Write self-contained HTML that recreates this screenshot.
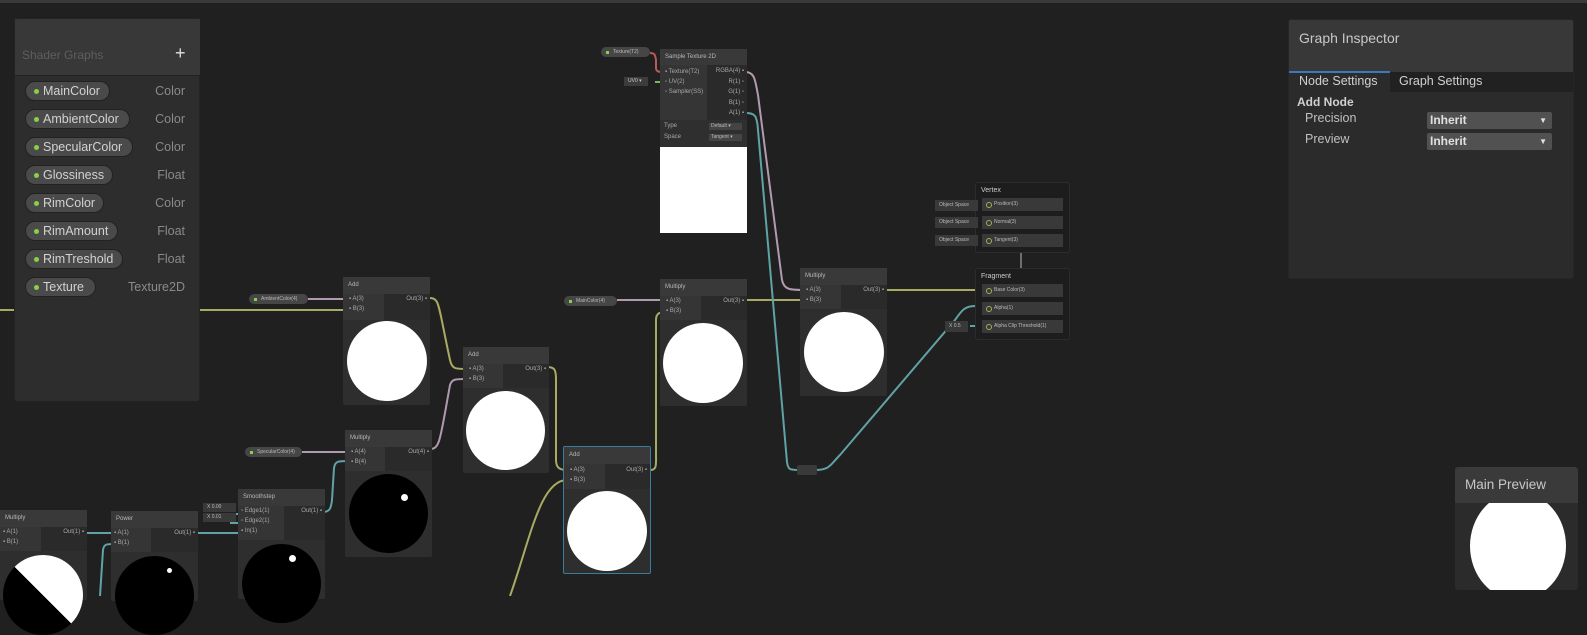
<!DOCTYPE html>
<html><head><meta charset="utf-8"><style>
*{margin:0;padding:0;box-sizing:border-box}
body{width:1587px;height:596px;background:#202020;overflow:hidden;position:relative;font-family:"Liberation Sans",sans-serif}
.a{position:absolute}
.n{position:absolute;background:#2e2e2e;border-radius:2px}
.h{position:absolute;left:0;right:0;top:0;height:17px;background:#393939;color:#b8b8b8;font-size:6px;line-height:17px;padding-left:5px}
.pl{position:absolute;left:0;background:#353535}
.pr{position:absolute;background:#2a2a2a}
.t{position:absolute;font-size:6px;color:#a8a8a8;white-space:nowrap}
.c{position:absolute;border-radius:50%;background:#fff}
.pill{position:absolute;height:20px;border-radius:10px;background:#4a4a4a;border:1px solid #222;color:#d2d2d2;font-size:12.5px;line-height:18px;padding-left:17px}
.pill:before{content:"";position:absolute;left:8px;top:7px;width:5px;height:5px;border-radius:50%;background:#86d04a}
.ty{position:absolute;right:14px;color:#8a8a8a;font-size:12.5px}
.sp{position:absolute;height:10px;border-radius:5px;background:#464646;font-size:5px;color:#bbb;line-height:10px;padding-left:12px;white-space:nowrap}
.sp:before{content:"";position:absolute;left:5px;top:4px;width:3px;height:3px;background:#86d04a}
.row{position:absolute;left:6px;right:6px;height:13px;background:#393939;font-size:5px;color:#bbb;line-height:13px;padding-left:12px;white-space:nowrap;text-align:left;overflow:hidden}
.row:before{content:"";position:absolute;left:4px;top:4px;width:4px;height:4px;border-radius:50%;border:1px solid #a8ab62}
.os{position:absolute;height:11px;background:#393939;font-size:5px;color:#bbb;line-height:11px;padding-left:4px;white-space:nowrap}
</style></head><body>
<div class="a" style="left:0;top:0;width:1587px;height:3px;background:#3a3a3a"></div>

<svg class="a" style="left:0;top:0" width="1587" height="596" fill="none" stroke-width="2">
<path d="M0 310 H345" stroke="#a8ab62"/>
<path d="M308 299 H345" stroke="#b19ab0"/>
<path d="M428 298 C440 298 437 300 450 360 C452 369 455 369 467 369" stroke="#a8ab62"/>
<path d="M430 449 C440 449 440 440 450 385 C452 379 455 379 467 379" stroke="#b19ab0"/>
<path d="M547 367 C555 367 556 370 556 380 V460 C556 468 560 470 567 470" stroke="#a8ab62"/>
<path d="M510 596 C530 540 540 480 567 480" stroke="#a8ab62"/>
<path d="M650 470 C657 470 656 465 656 455 V320 C656 313 660 312 666 312" stroke="#a8ab62"/>
<path d="M617 300 H666" stroke="#b19ab0"/>
<path d="M745 300 H806" stroke="#a8ab62"/>
<path d="M745 72 C755 72 755 80 758 95 L782 280 C784 290 790 290 806 290" stroke="#b19ab0"/>
<path d="M745 113 C755 113 757 115 758 130 L787 462 C788 470 790 470 800 470" stroke="#5fa3a6"/>
<path d="M815 470 C830 470 830 465 840 455 L955 320 C962 310 965 306 975 306" stroke="#5fa3a6"/>
<path d="M884 290 H984" stroke="#a8ab62"/>
<path d="M650 53 C655 53 655 55 656 60 V68 C656 72 660 72 663 72" stroke="#b85a5a"/>
<path d="M655 82 H664" stroke="#76b860"/>
<path d="M302 452 H349" stroke="#b19ab0"/>
<path d="M323 512 C330 512 331 508 332 500 L334 468 C335 461 338 461 349 461" stroke="#5fa3a6"/>
<path d="M197 533 C210 533 220 533 243 533" stroke="#5fa3a6"/>
<path d="M85 533 H115" stroke="#5fa3a6"/>
<path d="M100 596 L103 550 C104 544 106 544 115 544" stroke="#5fa3a6"/>
<path d="M230 514 H243 M230 523 H243" stroke="#5fa3a6"/>
<path d="M970 205 H984 M970 222 H984 M970 240 H984" stroke="#a8ab62"/>
<path d="M970 326 H984" stroke="#5fa3a6"/>
<path d="M1021 253 V268" stroke="#888" stroke-width="1.5"/>
</svg>

<div class="a" style="left:14px;top:18px;width:186px;height:384px;background:#2d2d2d;border-radius:3px;border:1px solid #232323">
 <div class="a" style="left:0;top:0;width:185px;height:57px;background:#383838;border-bottom:1px solid #222"></div>
 <div class="a" style="left:7px;top:29px;color:#5e5e5e;font-size:12px">Shader Graphs</div>
 <div class="a" style="left:160px;top:24px;color:#e0e0e0;font-size:18px">+</div>
 <div class="pill" style="left:10px;top:62px;width:85px">MainColor</div><div class="ty" style="top:65px">Color</div>
 <div class="pill" style="left:10px;top:90px;width:105px">AmbientColor</div><div class="ty" style="top:93px">Color</div>
 <div class="pill" style="left:10px;top:118px;width:108px">SpecularColor</div><div class="ty" style="top:121px">Color</div>
 <div class="pill" style="left:10px;top:146px;width:88px">Glossiness</div><div class="ty" style="top:149px">Float</div>
 <div class="pill" style="left:10px;top:174px;width:79px">RimColor</div><div class="ty" style="top:177px">Color</div>
 <div class="pill" style="left:10px;top:202px;width:93px">RimAmount</div><div class="ty" style="top:205px">Float</div>
 <div class="pill" style="left:10px;top:230px;width:98px">RimTreshold</div><div class="ty" style="top:233px">Float</div>
 <div class="pill" style="left:10px;top:258px;width:71px">Texture</div><div class="ty" style="top:261px">Texture2D</div>
</div>

<div class="sp" style="left:249px;top:294px;width:59px">AmbientColor(4)</div>
<div class="sp" style="left:564px;top:296px;width:53px">MainColor(4)</div>
<div class="sp" style="left:245px;top:447px;width:57px">SpecularColor(4)</div>
<div class="sp" style="left:601px;top:47px;width:49px">Texture(T2)</div>

<div class="n" style="left:343px;top:277px;width:87px;height:128px"><div class="h">Add</div>
<div class="pl" style="top:17px;width:41px;height:26px"></div><div class="pr" style="left:41px;top:17px;width:46px;height:26px"></div>
<div class="t" style="left:6px;top:19px">▪ A(3)</div><div class="t" style="left:6px;top:29px">▪ B(3)</div><div class="t" style="right:3px;top:19px">Out(3) ▪</div>
<div class="c" style="left:4px;top:44px;width:80px;height:80px"></div></div>

<div class="n" style="left:463px;top:347px;width:86px;height:126px"><div class="h">Add</div>
<div class="pl" style="top:17px;width:40px;height:24px"></div><div class="pr" style="left:40px;top:17px;width:46px;height:24px"></div>
<div class="t" style="left:6px;top:19px">▪ A(3)</div><div class="t" style="left:6px;top:29px">▪ B(3)</div><div class="t" style="right:3px;top:19px">Out(3) ▪</div>
<div class="c" style="left:3px;top:44px;width:79px;height:79px"></div></div>

<div class="n" style="left:345px;top:430px;width:87px;height:127px"><div class="h">Multiply</div>
<div class="pl" style="top:17px;width:40px;height:24px"></div><div class="pr" style="left:40px;top:17px;width:47px;height:24px"></div>
<div class="t" style="left:6px;top:19px">▪ A(4)</div><div class="t" style="left:6px;top:29px">▪ B(4)</div><div class="t" style="right:3px;top:19px">Out(4) ▪</div>
<div class="c" style="left:4px;top:44px;width:79px;height:79px;background:#000"></div>
<div class="c" style="left:56px;top:64px;width:7px;height:7px"></div></div>

<div class="n" style="left:563px;top:446px;width:88px;height:128px;border:1px solid #3a7ca0"><div class="h">Add</div>
<div class="pl" style="top:17px;width:41px;height:25px"></div><div class="pr" style="left:41px;top:17px;width:45px;height:25px"></div>
<div class="t" style="left:6px;top:20px">▪ A(3)</div><div class="t" style="left:6px;top:30px">▪ B(3)</div><div class="t" style="right:3px;top:20px">Out(3) ▪</div>
<div class="c" style="left:3px;top:44px;width:80px;height:80px"></div></div>

<div class="n" style="left:660px;top:279px;width:87px;height:127px"><div class="h">Multiply</div>
<div class="pl" style="top:17px;width:41px;height:24px"></div><div class="pr" style="left:41px;top:17px;width:46px;height:24px"></div>
<div class="t" style="left:6px;top:19px">▪ A(3)</div><div class="t" style="left:6px;top:29px">▪ B(3)</div><div class="t" style="right:3px;top:19px">Out(3) ▪</div>
<div class="c" style="left:3px;top:44px;width:80px;height:80px"></div></div>

<div class="n" style="left:800px;top:268px;width:87px;height:128px"><div class="h">Multiply</div>
<div class="pl" style="top:17px;width:41px;height:24px"></div><div class="pr" style="left:41px;top:17px;width:46px;height:24px"></div>
<div class="t" style="left:6px;top:19px">▪ A(3)</div><div class="t" style="left:6px;top:29px">▪ B(3)</div><div class="t" style="right:3px;top:19px">Out(3) ▪</div>
<div class="c" style="left:4px;top:44px;width:80px;height:80px"></div></div>

<div class="n" style="left:660px;top:49px;width:87px;height:184px;background:#2f2f2f"><div class="h">Sample Texture 2D</div>
<div class="pl" style="top:16px;width:47px;height:55px"></div><div class="pr" style="left:47px;top:16px;width:40px;height:55px"></div>
<div class="t" style="left:5px;top:20px">▪ Texture(T2)</div><div class="t" style="left:5px;top:30px">▫ UV(2)</div><div class="t" style="left:5px;top:40px">▫ Sampler(SS)</div>
<div class="t" style="right:3px;top:19px">RGBA(4) ▪</div><div class="t" style="right:3px;top:30px">R(1) ▫</div><div class="t" style="right:3px;top:40px">G(1) ▫</div><div class="t" style="right:3px;top:51px">B(1) ▫</div><div class="t" style="right:3px;top:61px">A(1) ▪</div>
<div class="t" style="left:4px;top:74px">Type</div><div class="a" style="left:49px;top:74px;width:33px;height:7px;background:#444;font-size:5px;color:#bbb;padding-left:2px;white-space:nowrap">Default ▾</div>
<div class="t" style="left:4px;top:85px">Space</div><div class="a" style="left:49px;top:85px;width:33px;height:7px;background:#444;font-size:5px;color:#bbb;padding-left:2px;white-space:nowrap">Tangent ▾</div>
<div class="a" style="left:0;top:98px;width:87px;height:86px;background:#fff"></div></div>
<div class="a" style="left:624px;top:77px;width:24px;height:9px;background:#3c3c3c;font-size:5px;color:#ccc;line-height:9px;padding-left:4px;white-space:nowrap">UV0 ▾</div>

<div class="a" style="left:797px;top:465px;width:20px;height:10px;background:#3a3a3a;border-radius:2px"></div>

<div class="a" style="left:975px;top:182px;width:95px;height:71px;background:#1d1d1d;border:1px solid #2c2c2c;border-radius:3px">
<div class="t" style="left:5px;top:4px;font-size:7px;color:#ccc">Vertex</div>
<div class="row" style="top:15px">Position(3)</div><div class="row" style="top:33px">Normal(3)</div><div class="row" style="top:51px">Tangent(3)</div></div>
<div class="a" style="left:975px;top:268px;width:95px;height:72px;background:#1d1d1d;border:1px solid #2c2c2c;border-radius:3px">
<div class="t" style="left:5px;top:4px;font-size:7px;color:#ccc">Fragment</div>
<div class="row" style="top:15px">Base Color(3)</div><div class="row" style="top:33px">Alpha(1)</div><div class="row" style="top:51px">Alpha Clip Threshold(1)</div></div>
<div class="os" style="left:935px;top:200px;width:43px">Object Space</div>
<div class="os" style="left:935px;top:217px;width:43px">Object Space</div>
<div class="os" style="left:935px;top:235px;width:43px">Object Space</div>
<div class="os" style="left:945px;top:321px;width:23px">X 0.5</div>

<div class="n" style="left:0;top:510px;width:87px;height:90px"><div class="h">Multiply</div>
<div class="pl" style="top:17px;width:41px;height:24px"></div><div class="pr" style="left:41px;top:17px;width:46px;height:24px"></div>
<div class="t" style="left:3px;top:19px">▪ A(1)</div><div class="t" style="left:3px;top:29px">▪ B(1)</div><div class="t" style="right:3px;top:19px">Out(1) ▪</div>
<div class="c" style="left:3px;top:45px;width:80px;height:80px;background:linear-gradient(45deg,#000 50%,#fff 50%)"></div></div>
<div class="n" style="left:111px;top:511px;width:87px;height:90px"><div class="h">Power</div>
<div class="pl" style="top:17px;width:40px;height:24px"></div><div class="pr" style="left:40px;top:17px;width:47px;height:24px"></div>
<div class="t" style="left:3px;top:19px">▪ A(1)</div><div class="t" style="left:3px;top:29px">▪ B(1)</div><div class="t" style="right:3px;top:19px">Out(1) ▪</div>
<div class="c" style="left:4px;top:45px;width:79px;height:79px;background:#000"></div>
<div class="c" style="left:56px;top:57px;width:5px;height:5px"></div></div>
<div class="n" style="left:238px;top:489px;width:87px;height:110px"><div class="h">Smoothstep</div>
<div class="pl" style="top:17px;width:46px;height:34px"></div><div class="pr" style="left:46px;top:17px;width:41px;height:34px"></div>
<div class="t" style="left:3px;top:19px">▫ Edge1(1)</div><div class="t" style="left:3px;top:29px">▫ Edge2(1)</div><div class="t" style="left:3px;top:39px">▪ In(1)</div><div class="t" style="right:3px;top:19px">Out(1) ▪</div>
<div class="c" style="left:4px;top:55px;width:79px;height:79px;background:#000"></div>
<div class="c" style="left:51px;top:66px;width:7px;height:7px"></div></div>
<div class="os" style="left:203px;top:503px;width:33px;height:9px;line-height:9px">X 0.00</div>
<div class="os" style="left:203px;top:513px;width:33px;height:9px;line-height:9px">X 0.01</div>

<div class="a" style="left:1288px;top:19px;width:286px;height:260px;background:#2b2b2b;border-radius:3px;border:1px solid #262626;overflow:hidden">
<div class="a" style="left:0;top:0;width:286px;height:52px;background:#383838"></div>
<div class="a" style="left:10px;top:10px;color:#c8c8c8;font-size:14px">Graph Inspector</div>
<div class="a" style="left:0;top:52px;width:286px;height:20px;background:#212121"></div>
<div class="a" style="left:0;top:51px;width:101px;height:21px;background:#2b2b2b;border-top:2px solid #3a79bb"></div>
<div class="a" style="left:10px;top:54px;color:#d0d0d0;font-size:12.5px">Node Settings</div>
<div class="a" style="left:110px;top:54px;color:#d0d0d0;font-size:12.5px">Graph Settings</div>
<div class="a" style="left:8px;top:75px;color:#d0d0d0;font-size:12px;font-weight:bold">Add Node</div>
<div class="a" style="left:16px;top:91px;color:#c0c0c0;font-size:12.5px">Precision</div>
<div class="a" style="left:16px;top:112px;color:#c0c0c0;font-size:12.5px">Preview</div>
<div class="a" style="left:138px;top:92px;width:125px;height:17px;background:#515151;border-radius:2px;color:#e0e0e0;font-size:12px;font-weight:bold;line-height:17px;padding-left:3px">Inherit<span style="position:absolute;right:5px;font-size:8px">▼</span></div>
<div class="a" style="left:138px;top:113px;width:125px;height:17px;background:#515151;border-radius:2px;color:#e0e0e0;font-size:12px;font-weight:bold;line-height:17px;padding-left:3px">Inherit<span style="position:absolute;right:5px;font-size:8px">▼</span></div>
</div>

<div class="a" style="left:1455px;top:467px;width:123px;height:123px;background:#2b2b2b;border-radius:3px;overflow:hidden">
<div class="a" style="left:0;top:0;width:123px;height:36px;background:#3a3a3a"></div>
<div class="a" style="left:10px;top:10px;color:#c8c8c8;font-size:13.5px">Main Preview</div>
<div class="c" style="left:15px;top:25px;width:96px;height:108px;clip-path:inset(11px 0 0 0)"></div>
</div>
</body></html>
